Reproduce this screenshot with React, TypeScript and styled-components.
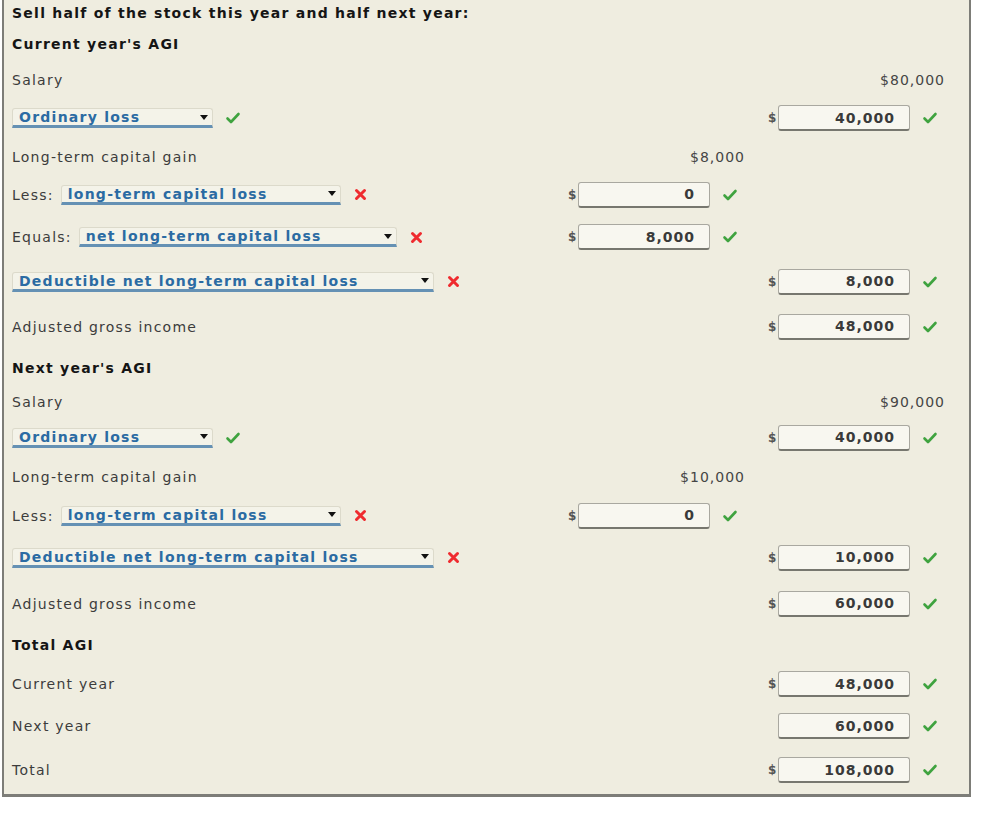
import React from 'react';
import styled, {createGlobalStyle} from 'styled-components';

const GlobalStyle = createGlobalStyle`
  html, body {
    margin: 0;
    padding: 0;
    background: #ffffff;
  }
  body {
    font-family: "DejaVu Sans", Verdana, sans-serif;
  }
`

const Page = styled.div`
  width: 1000px;
  padding-left: 2px;
  box-sizing: border-box;
`

const Panel = styled.div`
  width: 969px;
  box-sizing: border-box;
  background: #efede0;
  border-left: 2px solid #7d7d78;
  border-right: 2px solid #7d7d78;
  border-bottom: 3px solid #7d7d78;
  box-shadow: 0 2px 0 #d6d6d2;
  padding: 0 18px 2px 8px;
  letter-spacing: 1.25px;
`

const Row = styled.div<{ $h: number }>`
  display: grid;
  grid-template-columns: 1fr 200px 190px;
  align-items: center;
  height: ${({$h}) => $h}px;
`

const Left = styled.div`
  display: flex;
  align-items: center;
  gap: 7px;
`

const Heading = styled.div`
  font-size: 14px;
  font-weight: bold;
  color: #151515;
`

const Label = styled.span`
  font-size: 14px;
  color: #3c3c3c;
`

const Cell = styled.div`
  display: flex;
  align-items: center;
  padding-left: 7px;
`

const Value = styled.div`
  width: 177px;
  text-align: right;
  font-size: 14px;
  color: #454545;
  letter-spacing: 1px;
`

const Dollar = styled.span`
  width: 10px;
  font-size: 12px;
  font-weight: bold;
  color: #555;
  letter-spacing: 0;
`

const Box = styled.input`
  width: 132px;
  height: 26px;
  box-sizing: border-box;
  margin: 0;
  padding: 0 14px 0 4px;
  border: 1px solid #a9a8a0;
  border-bottom: 2px solid #77776f;
  border-radius: 3px;
  background: #f8f7f0;
  text-align: right;
  font-family: "DejaVu Sans", Verdana, sans-serif;
  font-size: 14px;
  font-weight: bold;
  letter-spacing: 1px;
  color: #3a3a3a;
  outline: none;
`

const Select = styled.div<{ $w: number }>`
  width: ${({$w}) => $w}px;
  height: 20px;
  box-sizing: border-box;
  display: flex;
  align-items: center;
  justify-content: space-between;
  padding: 0 4px 0 6px;
  background: #f4f3e9;
  border: 1px solid #dcdacb;
  border-bottom: 3px solid #6591b4;
  border-radius: 3px 3px 0 0;
  font-size: 14px;
  font-weight: bold;
  color: #2b6ba3;
  white-space: nowrap;
`

const Arrow = styled.span`
  width: 0;
  height: 0;
  border-left: 4px solid transparent;
  border-right: 4px solid transparent;
  border-top: 5px solid #111;
`

const MarkWrap = styled.span<{ $gap: number }>`
  display: inline-flex;
  margin-left: ${({$gap}) => $gap}px;
`

const Check = ({gap = 12}: { gap?: number }) => (
    <MarkWrap $gap={gap}>
        <svg width="16" height="14" viewBox="0 0 16 14">
            <path d="M2.5 7.5 L6 11 L13.5 3" fill="none" stroke="#3fa33f" strokeWidth="2.6"
                  strokeLinecap="round" strokeLinejoin="round"/>
        </svg>
    </MarkWrap>
)

const Cross = () => (
    <MarkWrap $gap={6}>
        <svg width="13" height="13" viewBox="0 0 13 13">
            <path d="M2.5 2.5 L10.5 10.5 M10.5 2.5 L2.5 10.5" fill="none" stroke="#ef2b2f" strokeWidth="3"
                  strokeLinecap="round"/>
        </svg>
    </MarkWrap>
)

const Amount = ({value, dollar = true}: { value: string, dollar?: boolean }) => (
    <Cell>
        <Dollar>{dollar ? '$' : ''}</Dollar>
        <Box readOnly value={value}/>
        <Check/>
    </Cell>
)

const Dropdown = ({text, width}: { text: string, width: number }) => (
    <Select $w={width}>
        <span>{text}</span>
        <Arrow/>
    </Select>
)

export default function App() {
    return (
        <Page>
            <GlobalStyle/>
            <Panel>
                <Row $h={26}>
                    <Heading>Sell half of the stock this year and half next year:</Heading>
                </Row>
                <Row $h={36}>
                    <Heading>Current year's AGI</Heading>
                </Row>
                <Row $h={36}>
                    <Label>Salary</Label>
                    <div/>
                    <Cell><Value>$80,000</Value></Cell>
                </Row>
                <Row $h={40}>
                    <Left><Dropdown text="Ordinary loss" width={201}/><Check gap={5}/></Left>
                    <div/>
                    <Amount value="40,000"/>
                </Row>
                <Row $h={37}>
                    <Label>Long-term capital gain</Label>
                    <Cell><Value>$8,000</Value></Cell>
                    <div/>
                </Row>
                <Row $h={39}>
                    <Left><Label>Less:</Label><Dropdown text="long-term capital loss" width={280}/><Cross/></Left>
                    <Amount value="0"/>
                    <div/>
                </Row>
                <Row $h={46}>
                    <Left><Label>Equals:</Label><Dropdown text="net long-term capital loss" width={318}/><Cross/></Left>
                    <Amount value="8,000"/>
                    <div/>
                </Row>
                <Row $h={43}>
                    <Left><Dropdown text="Deductible net long-term capital loss" width={422}/><Cross/></Left>
                    <div/>
                    <Amount value="8,000"/>
                </Row>
                <Row $h={47}>
                    <Label>Adjusted gross income</Label>
                    <div/>
                    <Amount value="48,000"/>
                </Row>
                <Row $h={35}>
                    <Heading>Next year's AGI</Heading>
                </Row>
                <Row $h={33}>
                    <Label>Salary</Label>
                    <div/>
                    <Cell><Value>$90,000</Value></Cell>
                </Row>
                <Row $h={39}>
                    <Left><Dropdown text="Ordinary loss" width={201}/><Check gap={5}/></Left>
                    <div/>
                    <Amount value="40,000"/>
                </Row>
                <Row $h={40}>
                    <Label>Long-term capital gain</Label>
                    <Cell><Value>$10,000</Value></Cell>
                    <div/>
                </Row>
                <Row $h={37}>
                    <Left><Label>Less:</Label><Dropdown text="long-term capital loss" width={280}/><Cross/></Left>
                    <Amount value="0"/>
                    <div/>
                </Row>
                <Row $h={47}>
                    <Left><Dropdown text="Deductible net long-term capital loss" width={422}/><Cross/></Left>
                    <div/>
                    <Amount value="10,000"/>
                </Row>
                <Row $h={45}>
                    <Label>Adjusted gross income</Label>
                    <div/>
                    <Amount value="60,000"/>
                </Row>
                <Row $h={38}>
                    <Heading>Total AGI</Heading>
                </Row>
                <Row $h={40}>
                    <Label>Current year</Label>
                    <div/>
                    <Amount value="48,000"/>
                </Row>
                <Row $h={44}>
                    <Label>Next year</Label>
                    <div/>
                    <Amount value="60,000" dollar={false}/>
                </Row>
                <Row $h={44}>
                    <Label>Total</Label>
                    <div/>
                    <Amount value="108,000"/>
                </Row>
            </Panel>
        </Page>
    );
}
